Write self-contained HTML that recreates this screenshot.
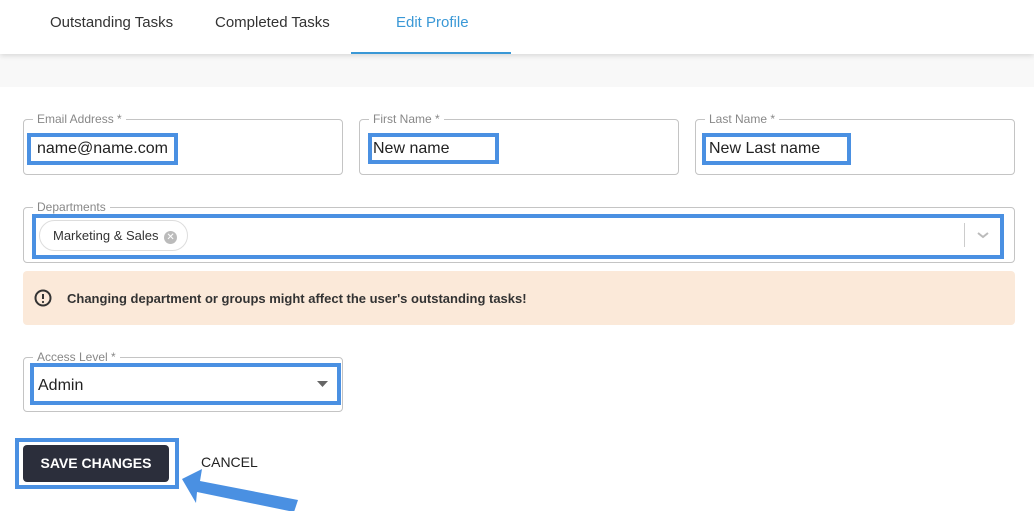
<!DOCTYPE html>
<html><head><style>
*{margin:0;padding:0;box-sizing:border-box}
body{width:1034px;height:511px;overflow:hidden;background:#fff;font-family:"Liberation Sans",sans-serif;position:relative;color:#2b2d3a}
.a{position:absolute}
.tab{position:absolute;top:14px;font-size:15px;color:#333}
.fs{position:absolute;border:1px solid #c4c4c4;border-radius:4px}
.lg{position:absolute;top:-8px;left:9px;background:#fff;padding:0 4px;font-size:12px;color:#888;white-space:nowrap}
.hl{position:absolute;border:4px solid #4a90e2}
.val{position:absolute;font-size:16px;color:#222}
</style></head><body>
<div class="a" style="left:0;top:0;width:1034px;height:54px;background:#fff;box-shadow:0 2px 5px rgba(0,0,0,.12);z-index:2"></div>
<div class="a" style="left:0;top:54px;width:1034px;height:33px;background:#f8f8f8"></div>
<div class="tab" style="left:50px;z-index:3">Outstanding Tasks</div>
<div class="tab" style="left:215px;z-index:3">Completed Tasks</div>
<div class="tab" style="left:396px;color:#3a98d6;z-index:3">Edit Profile</div>
<div class="a" style="left:351px;top:52px;width:160px;height:2px;background:#3a98d6;z-index:3"></div>

<div class="fs" style="left:23px;top:119px;width:320px;height:56px"><span class="lg">Email Address *</span></div>
<div class="fs" style="left:359px;top:119px;width:320px;height:56px"><span class="lg">First Name *</span></div>
<div class="fs" style="left:695px;top:119px;width:320px;height:56px"><span class="lg">Last Name *</span></div>
<div class="val" style="left:37px;top:140px">name@name.com</div>
<div class="val" style="left:373px;top:140px">New name</div>
<div class="val" style="left:709px;top:140px">New Last name</div>

<div class="fs" style="left:23px;top:207px;width:992px;height:56px"><span class="lg">Departments</span></div>
<div class="a" style="left:39px;top:220px;width:149px;height:31px;border:1px solid #ddd;border-radius:16px;font-size:13px;padding:7px 0 0 13px;color:#333">Marketing &amp; Sales <span style="display:inline-block;width:13px;height:13px;border-radius:50%;background:#bbb;color:#fff;font-size:10px;line-height:13px;text-align:center;vertical-align:0;margin-left:2px">✕</span></div>
<div class="a" style="left:964px;top:223px;width:1px;height:24px;background:#ccc"></div>
<svg class="a" style="left:976px;top:230px" width="14" height="10"><path d="M2 3l5 4 5-4" stroke="#bbb" stroke-width="2" fill="none"/></svg>

<div class="a" style="left:23px;top:271px;width:992px;height:54px;background:#fbe9d9;border-radius:4px"></div>
<svg class="a" style="left:34px;top:289px" width="18" height="18"><circle cx="9" cy="9" r="7.5" stroke="#333" stroke-width="2" fill="none"/><path d="M9 5v5" stroke="#333" stroke-width="2"/><circle cx="9" cy="13" r="1.1" fill="#333"/></svg>
<div class="a" style="left:67px;top:291px;font-size:13px;font-weight:bold;color:#333">Changing department or groups might affect the user's outstanding tasks!</div>

<div class="fs" style="left:23px;top:357px;width:320px;height:55px"><span class="lg">Access Level *</span></div>
<div class="val" style="left:38px;top:377px">Admin</div>
<svg class="a" style="left:317px;top:381px" width="12" height="7"><path d="M0 0h11l-5.5 6z" fill="#666"/></svg>

<div class="a" style="left:23px;top:445px;width:146px;height:37px;background:#2b2e3b;border-radius:4px;color:#fff;font-size:14px;font-weight:bold;text-align:center;line-height:37px">SAVE CHANGES</div>
<div class="a" style="left:201px;top:454px;font-size:14px;color:#222">CANCEL</div>

<div class="hl" style="left:27px;top:133px;width:151px;height:32px"></div>
<div class="hl" style="left:368px;top:133px;width:131px;height:31px"></div>
<div class="hl" style="left:702px;top:133px;width:149px;height:32px"></div>
<div class="hl" style="left:32px;top:214px;width:972px;height:45px"></div>
<div class="hl" style="left:30px;top:363px;width:311px;height:42px"></div>
<div class="hl" style="left:15px;top:438px;width:164px;height:51px"></div>
<svg class="a" style="left:0;top:0" width="1034" height="511"><polygon points="182,479 202,469 200,481 298,500 294,512 197,492 196,503" fill="#4a90e2"/></svg>
</body></html>
